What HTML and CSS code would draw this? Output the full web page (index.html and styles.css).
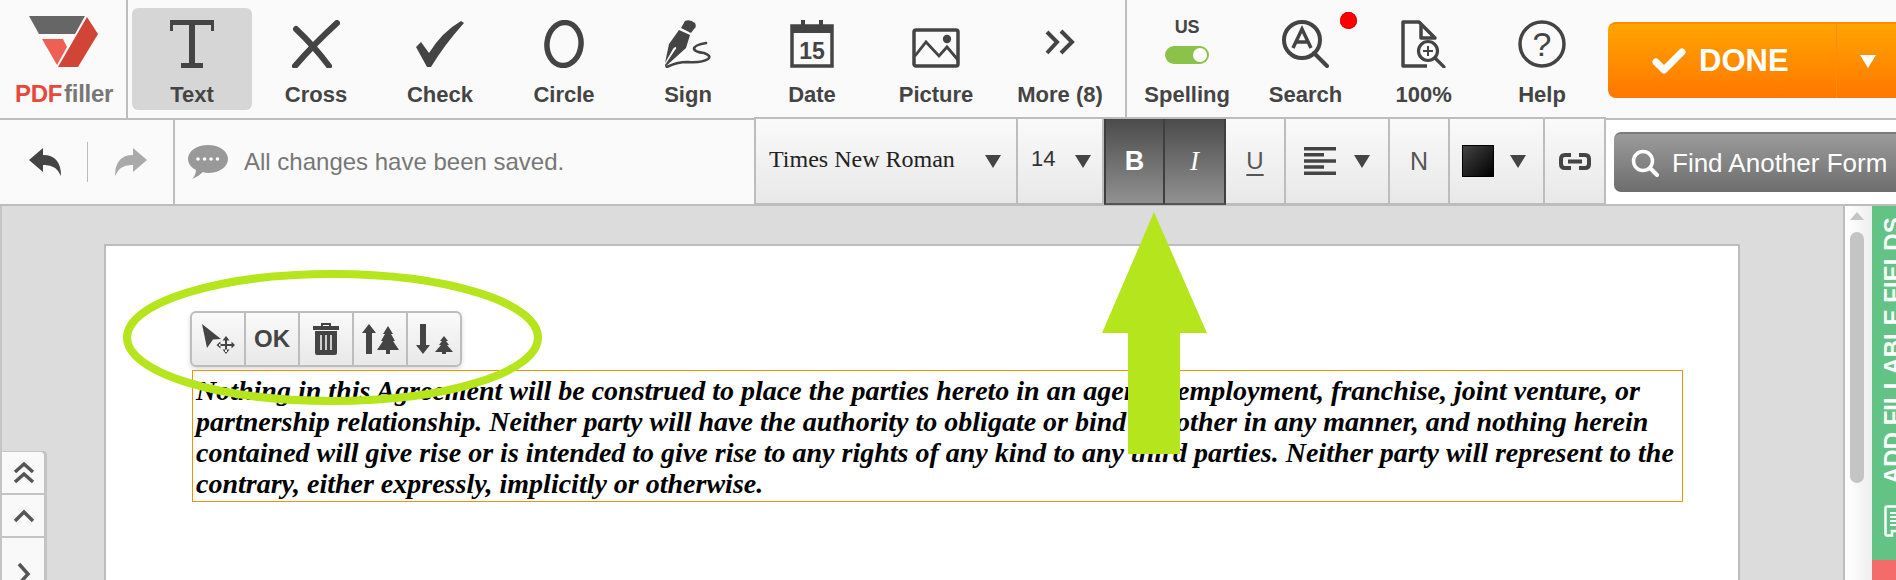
FILE: index.html
```html
<!DOCTYPE html>
<html lang="en">
<head>
<meta charset="utf-8">
<title>PDFfiller</title>
<link rel="stylesheet" href="styles.css">
</head>
<body>
<div class="app">
  <header class="top">
    <div class="logo">
      <svg class="logo-mark" viewBox="0 0 70 52" width="70" height="52">
        <path fill="#666" d="M0 0H56L46 18H10Z"/>
        <path fill="#ee6055" d="M13 23H34L38 31L28 49Z"/>
        <path fill="#d04535" d="M58 1L69 18L49 51H29Z"/>
      </svg>
      <div class="logo-text"><span class="logo-pdf">PDF</span><span class="logo-filler">filler</span></div>
    </div>
    <nav class="tools">
      <div class="tool active">
        <svg class="ico" width="44" height="48" viewBox="0 0 44 48"><path fill="#444" d="M0 0H44V11H41V5H25V43H33V48H11V43H19V5H3V11H0Z"/></svg>
        <span class="label">Text</span>
      </div>
      <div class="tool">
        <svg class="ico" width="48" height="48" viewBox="0 0 48 48"><path fill="none" stroke="#444" stroke-width="6" stroke-linecap="round" d="M45 3Q22 24 3 46M4 9Q22 26 37 46"/></svg>
        <span class="label">Cross</span>
      </div>
      <div class="tool">
        <svg class="ico" width="48" height="48" viewBox="0 0 48 48"><path fill="#444" d="M0 27L5 22L13 33Q26 12 45 1L48 3Q29 24 15 47H11Z"/></svg>
        <span class="label">Check</span>
      </div>
      <div class="tool">
        <svg class="ico" width="42" height="48" viewBox="0 0 42 48"><ellipse cx="21" cy="24" rx="17" ry="21.5" fill="none" stroke="#444" stroke-width="5.5" transform="rotate(6 21 24)"/></svg>
        <span class="label">Circle</span>
      </div>
      <div class="tool">
        <svg class="ico" width="48" height="48" viewBox="0 0 48 48">
          <path fill="#444" d="M21 1Q26-1 31 3Q33 7 30 9L27 13L17 8Z"/>
          <path fill="#444" d="M15 10L26 15L22 28L1 47L1 45L11 30Q13 29 12 27Q10 27 9 29L1 43L5 24Z"/>
          <path fill="none" stroke="#444" stroke-width="2.6" stroke-linecap="round" d="M42 23Q30 25 30 29Q31 32 40 33Q48 36 44 39Q38 43 24 42Q12 42 3 47"/>
        </svg>
        <span class="label">Sign</span>
      </div>
      <div class="tool">
        <svg class="ico" width="44" height="48" viewBox="0 0 44 48">
          <path fill="none" stroke="#444" stroke-width="3.5" d="M2 6H42V46H2Z"/>
          <path fill="#444" d="M2 6H42V13H2ZM11 0H15V8H11ZM29 0H33V8H29Z"/>
          <text x="22" y="39" class="cal">15</text>
        </svg>
        <span class="label">Date</span>
      </div>
      <div class="tool">
        <svg class="ico" width="48" height="48" viewBox="0 0 48 48">
          <rect x="2" y="10" width="44" height="36" rx="2" fill="none" stroke="#444" stroke-width="3.5"/>
          <path fill="none" stroke="#444" stroke-width="2.8" d="M3 36L14 22L27 36L35 27L46 40"/>
          <circle cx="35" cy="19" r="4.2" fill="#444"/>
        </svg>
        <span class="label">Picture</span>
      </div>
      <div class="tool">
        <svg class="ico" width="48" height="48" viewBox="0 0 48 48"><path fill="none" stroke="#444" stroke-width="4" d="M11 12L21 22L11 33M25 11L36 22L25 33" /></svg>
        <span class="label">More (8)</span>
      </div>
    </nav>
    <div class="utils">
      <div class="tool util">
        <div class="ico spell">
          <span class="lang">US</span>
          <span class="toggle"><span class="knob"></span></span>
        </div>
        <span class="label">Spelling</span>
      </div>
      <div class="tool util">
        <svg class="ico" width="48" height="48" viewBox="0 0 48 48">
          <circle cx="21" cy="20" r="18" fill="none" stroke="#444" stroke-width="4"/>
          <path stroke="#444" stroke-width="4" stroke-linecap="round" d="M33 33L46 46"/>
          <path fill="none" stroke="#444" stroke-width="3.5" d="M12 28L21 9L30 28M15 22H27"/>
        </svg>
        <span class="dot"></span>
        <span class="label">Search</span>
      </div>
      <div class="tool util">
        <svg class="ico" width="46" height="48" viewBox="0 0 46 48">
          <path fill="none" stroke="#444" stroke-width="3.5" stroke-linejoin="round" d="M26 46H2V2H18L34 18H20V3"/>
          <circle cx="27" cy="31" r="9.5" fill="#fafafa" stroke="#444" stroke-width="3.2"/>
          <path stroke="#444" stroke-width="2" d="M22 31H32M27 26V36"/>
          <path stroke="#444" stroke-width="3.2" stroke-linecap="round" d="M34 38L43 47"/>
        </svg>
        <span class="label">100%</span>
      </div>
      <div class="tool util">
        <svg class="ico" width="48" height="48" viewBox="0 0 48 48">
          <circle cx="24" cy="24" r="22" fill="none" stroke="#444" stroke-width="3.5"/>
          <text x="24" y="36" class="q">?</text>
        </svg>
        <span class="label">Help</span>
      </div>
    </div>
    <div class="done">
      <span class="done-main">
        <svg width="34" height="26" viewBox="0 0 34 26"><path fill="none" stroke="#fff" stroke-width="7" stroke-linecap="round" stroke-linejoin="round" d="M4 14L12 22L30 4"/></svg>
        <span>DONE</span>
      </span>
      <span class="done-more"><span class="tri tri-white"></span></span>
    </div>
  </header>

  <section class="second">
    <div class="history">
      <svg width="32" height="28" viewBox="0 0 32 28"><path fill="#444" d="M0 12L14 0V7Q32 7 32 28Q27 16 14 17V24Z"/></svg>
      <span class="hist-sep"></span>
      <svg width="34" height="28" viewBox="0 0 32 28"><path fill="#aaa" d="M32 12L18 0V7Q0 7 0 28Q5 16 18 17V24Z"/></svg>
    </div>
    <div class="message">
      <svg width="40" height="34" viewBox="0 0 40 34">
        <path fill="#999" d="M20 0C31 0 40 6 40 14S31 28 20 28Q17 28 15 27Q10 32 4 34Q8 30 8 25Q0 21 0 14C0 6 9 0 20 0Z"/>
        <g fill="#fff"><circle cx="10" cy="14" r="1.8"/><circle cx="16.5" cy="14" r="1.8"/><circle cx="23" cy="14" r="1.8"/><circle cx="29.5" cy="14" r="1.8"/></g>
      </svg>
      <span>All changes have been saved.</span>
    </div>
    <div class="format">
      <div class="cell font-cell"><span class="font-name">Times New Roman</span><span class="tri"></span></div>
      <div class="cell size-cell"><span class="size-val">14</span><span class="tri"></span></div>
      <div class="cell bi on first"><span class="b-mark">B</span></div>
      <div class="cell bi on"><span class="i-mark">I</span></div>
      <div class="cell u-cell"><span class="u-mark">U</span></div>
      <div class="cell align-cell">
        <svg width="33" height="28" viewBox="0 0 33 28"><path fill="#444" d="M0 0H32V3.5H0ZM0 6.100H20V9.600H0ZM0 12.200H32V15.700H0ZM0 18.300H20V21.800H0ZM0 24.400H32V27.900H0Z"/></svg>
        <span class="tri"></span>
      </div>
      <div class="cell n-cell">N</div>
      <div class="cell color-cell"><span class="swatch"></span><span class="tri"></span></div>
      <div class="cell link-cell">
        <svg width="32" height="17" viewBox="0 0 32 17"><path fill="none" stroke="#444" stroke-width="4" d="M12 2H6Q2 2 2 6V11Q2 15 6 15H12M20 2H26Q30 2 30 6V11Q30 15 26 15H20M9 8.5H23"/></svg>
      </div>
    </div>
    <div class="find-wrap">
      <div class="find">
        <svg width="28" height="28" viewBox="0 0 28 28"><circle cx="12" cy="12" r="9.5" fill="none" stroke="#fff" stroke-width="3.5"/><path stroke="#fff" stroke-width="4" stroke-linecap="round" d="M19 19L26 26"/></svg>
        <span>Find Another Form</span>
      </div>
    </div>
  </section>

  <section class="work">
    <main class="canvas">
      <div class="page">
        <div class="mini">
          <div class="mini-cell">
            <svg width="33" height="30" viewBox="0 0 33 30">
              <path fill="#444" d="M0 0L19 15L11 15.500L5 24Z"/>
              <path fill="#444" d="M17 20H30V22H17ZM23 14H25V28H23ZM20.500 16.500L24 12L27.500 16.500ZM20.500 25.500L24 30L27.500 25.500ZM18.500 17.500L14.500 21L18.500 24.500ZM29.500 17.500L33 21L29.500 24.500Z"/>
            </svg>
          </div>
          <div class="mini-cell ok">OK</div>
          <div class="mini-cell">
            <svg width="26" height="32" viewBox="0 0 26 32">
              <path fill="#444" d="M0 3H8V0H18V3H26V7H0ZM10 2V3H16V2ZM2 8H24V30Q24 32 22 32H4Q2 32 2 30Z"/>
              <path stroke="#fafafa" stroke-width="1.5" d="M8 12V27M13 12V27M18 12V27"/>
            </svg>
          </div>
          <div class="mini-cell">
            <svg width="37" height="31" viewBox="0 0 37 31">
              <path fill="#444" d="M7 0L14 9H10V30H4V9H0Z"/>
              <path fill="#444" d="M26 2L31 10H29L33 17H31L37 26H28V30H24V26H15L21 17H19L23 10H21Z"/>
            </svg>
          </div>
          <div class="mini-cell">
            <svg width="37" height="31" viewBox="0 0 37 31">
              <path fill="#444" d="M4 0H10V21H14L7 30L0 21H4Z"/>
              <path fill="#444" d="M28 12L32 17H30L33 21H31L37 28H30V30H26V28H19L25 21H23L26 17H24Z"/>
            </svg>
          </div>
        </div>
        <div class="field">Nothing in this Agreement will be construed to place the parties hereto in an agency, employment, franchise, joint venture, or partnership relationship. Neither party will have the authority to obligate or bind the other in any manner, and nothing herein contained will give rise or is intended to give rise to any rights of any kind to any third parties. Neither party will represent to the contrary, either expressly, implicitly or otherwise.</div>
      </div>
      <div class="pager">
        <div class="pager-row"><svg width="24" height="24" viewBox="0 0 24 24"><path fill="none" stroke="#555" stroke-width="3.5" d="M3 11L12 3L21 11M3 21L12 13L21 21"/></svg></div>
        <div class="pager-row"><svg width="24" height="14" viewBox="0 0 24 14"><path fill="none" stroke="#555" stroke-width="3.5" d="M3 12L12 3L21 12"/></svg></div>
        <div class="pager-row last"><svg width="14" height="24" viewBox="0 0 14 24"><path fill="none" stroke="#555" stroke-width="3.5" d="M2 2L11 12L2 22"/></svg></div>
      </div>
    </main>
    <aside class="scroll">
      <span class="scroll-up"></span>
      <span class="thumb"></span>
    </aside>
    <aside class="side">
      <div class="side-green">
        <span class="side-text">ADD FILLABLE FIELDS</span>
        <svg class="side-ico" width="12" height="32" viewBox="0 0 12 32"><path fill="none" stroke="#fff" stroke-width="2.5" d="M12 1.5H3Q1.5 1.5 1.5 3V29Q1.5 30.5 3 30.5H8V26H12"/><path stroke="#fff" stroke-width="2" d="M6 8H12M6 12H12M6 16H12M6 20H12"/></svg>
      </div>
      <div class="side-red"></div>
    </aside>
  </section>

  <svg class="overlay" width="1896" height="580" viewBox="0 0 1896 580">
    <ellipse cx="332.5" cy="337.5" rx="205.5" ry="63.5" fill="none" stroke="#b5e61d" stroke-width="8"/>
    <path fill="#b5e61d" d="M1154 212L1207 333H1180V454H1128V333H1102Z"/>
  </svg>
</div>
</body>
</html>
```

FILE: styles.css
```css
* { box-sizing: border-box; }
html, body { margin: 0; height: 100%; overflow: hidden; background: #fff; }
body { font-family: "Liberation Sans", Arial, sans-serif; color: #444; }
.app { position: relative; width: 1896px; height: 580px; overflow: hidden; display: flex; flex-direction: column; }

.top { height: 120px; display: flex; background: #fafafa; border-bottom: 2px solid #bdbdbd; flex: none; }
.logo { width: 128px; flex: none; border-right: 2px solid #bdbdbd; padding: 16px 0 0 29px; }
.logo-mark { display: block; }
.logo-text { margin: 13px 0 0 -14px; font-weight: 700; font-size: 24px; line-height: 26px; letter-spacing: -0.3px; white-space: nowrap; }
.logo-pdf { color: #e8483c; }
.logo-filler { color: #777; margin-left: 2px; }

.tools { display: flex; width: 999px; flex: none; padding: 2px 0 0 2px; border-right: 2px solid #bdbdbd; }
.tool { position: relative; width: 124px; flex: none; display: flex; flex-direction: column; align-items: center; padding-top: 12px; margin-top: 6px; height: 102px; }
.tool.active { background: #d6d6d6; border-radius: 6px; width: 120px; margin-left: 2px; margin-right: 2px; }
.ico { display: block; height: 48px; flex: none; }
.label { font-size: 22px; font-weight: 700; line-height: 24px; margin-top: 15px; color: #444; white-space: nowrap; }
.cal { font: 700 23px "Liberation Sans", sans-serif; fill: #444; text-anchor: middle; }
.q { font: 400 34px "Liberation Sans", sans-serif; fill: #444; text-anchor: middle; }

.utils { display: flex; width: 480px; flex: none; padding: 2px 0 0 1px; }
.util { width: 118.3px; }
.spell { display: flex; flex-direction: column; align-items: center; width: 48px; }
.lang { font-size: 18px; font-weight: 700; line-height: 18px; margin-top: -2px; }
.toggle { display: block; width: 44px; height: 18px; margin-top: 10px; border-radius: 9px; background: #8bc34a; position: relative; }
.knob { position: absolute; right: 2px; top: 2px; width: 14px; height: 14px; border-radius: 50%; background: #fff; }
.dot { position: absolute; left: 94px; top: 4px; width: 17px; height: 17px; border-radius: 50%; background: #f00; box-shadow: inset 0 0 0 1px #d00; }

.done { flex: none; width: 289px; height: 76px; margin: 22px 0 0 1px; display: flex; border-radius: 8px 0 0 8px; background: linear-gradient(#ffa400, #ff7700); border-top: 2px solid #ff8a00; color: #fff; }
.done-main { width: 229px; display: flex; align-items: center; gap: 13px; padding-left: 44px; font-size: 31px; font-weight: 700; border-right: 1px solid #ff8a10; }
.done-more { flex: 1; display: flex; padding: 0 0 0 23px; align-items: center; }

.tri { display: block; width: 0; height: 0; border-left: 8px solid transparent; border-right: 8px solid transparent; border-top: 13px solid #444; }
.tri-white { border-top-color: #fff; }

.second { height: 86px; display: flex; flex: none; background: #fafafa; border-bottom: 2px solid #bdbdbd; }
.history { width: 175px; flex: none; border-right: 2px solid #bdbdbd; display: flex; align-items: center; padding-left: 29px; }
.hist-sep { width: 1px; height: 40px; background: #bbb; margin: 0 26px; }
.message { width: 579px; flex: none; display: flex; align-items: center; gap: 16px; padding-left: 13px; font-size: 24px; color: #777; }
.format { width: 852px; flex: none; display: flex; margin: -3px 0 -1px; height: 88px; background: linear-gradient(#fafafa, #e8e8e8); border: solid #bdbdbd; border-width: 2px 0 2px 2px; }
.cell { flex: none; height: 100%; display: flex; align-items: center; border-right: 2px solid #bdbdbd; }
.font-cell { width: 262px; padding-left: 13px; justify-content: space-between; padding-right: 15px; }
.font-name { font: 24px "Liberation Serif", serif; color: #222; margin-top: -4px; }
.size-cell { width: 86px; padding-left: 13px; gap: 20px; }
.size-val { font-size: 22px; color: #333; margin-top: -5px; }
.bi { width: 61px; justify-content: center; color: #fff; border-right: 2px solid #3f3f3f; }
.on { background: linear-gradient(#4b4b4b, #919191); margin-bottom: -2px; height: calc(100% + 2px); border-bottom: 2px solid #555; }
.first { border-left: 2px solid #3f3f3f; }
.b-mark { font-size: 27px; font-weight: 700; }
.i-mark { font: italic 27px "Liberation Serif", serif; }
.u-cell { width: 60px; justify-content: center; }
.u-mark { font-size: 24px; text-decoration: underline; text-underline-offset: 5px; color: #555; }
.align-cell { width: 104px; padding-left: 18px; gap: 17px; }
.n-cell { width: 60px; justify-content: center; font-size: 25px; color: #555; }
.color-cell { width: 95px; padding-left: 12px; gap: 16px; }
.swatch { width: 32px; height: 32px; background: linear-gradient(135deg, #444, #000); border: 1px solid #000; }
.link-cell { width: 61px; justify-content: center; }
.find-wrap { flex: 1; background: #fff; padding: 12px 0 0 8px; min-width: 0; }
.find { width: 300px; height: 60px; border-radius: 7px; display: flex; align-items: center; gap: 13px; padding-left: 17px; font-size: 26px; color: #fff; background: linear-gradient(#9b9b9b, #6d6d6d); border-top: 2px solid #7c7c7c; white-space: nowrap; }

.work { flex: 1; min-height: 0; display: flex; }
.canvas { position: relative; width: 1845px; flex: none; background: #dcdcdc; border-right: 2px solid #bdbdbd; border-left: 2px solid #c4c4c4; padding: 38px 0 0 102px; overflow: hidden; }
.page { position: relative; width: 1636px; height: 400px; background: #fff; border: 2px solid #bdbdbd; border-bottom: 0; }
.mini { position: absolute; left: 84px; top: 65px; width: 272px; height: 56px; display: flex; background: linear-gradient(#fafafa, #e8e8e8); border: 2px solid #bdbdbd; border-radius: 6px; box-shadow: 0 2px 4px rgba(0,0,0,.15); }
.mini-cell { width: 54px; flex: 1; display: flex; align-items: center; justify-content: center; border-right: 2px solid #bdbdbd; }
.mini-cell:last-child { border-right: 0; }
.ok { font-size: 24px; font-weight: 700; color: #444; }
.field { position: absolute; left: 86px; top: 124px; width: 1491px; height: 132px; border: 1px solid #f39200; padding: 4px 3px 0; font: italic 700 28px/31px "Liberation Serif", serif; color: #000; }
.pager { position: absolute; left: -2px; top: 246px; width: 44px; background: #f9f9f9; border-radius: 0 4px 0 0; box-shadow: 3px -1px 0 #c4c4c4; }
.pager-row { height: 43px; display: flex; align-items: center; justify-content: center; border-bottom: 2px solid #c4c4c4; padding-left: 4px; }
.pager-row.last { height: 60px; border-bottom: 0; padding-top: 12px; }

.scroll { width: 27px; flex: none; position: relative; background: linear-gradient(90deg, #fff, #efefef); }
.scroll-up { position: absolute; left: 5px; top: 6px; width: 0; height: 0; border-left: 7px solid transparent; border-right: 7px solid transparent; border-bottom: 8px solid #c4c4c4; }
.thumb { position: absolute; left: 5px; top: 26px; width: 14px; height: 251px; border-radius: 7px; background: #c4c4c4; }

.side { width: 24px; flex: none; display: flex; flex-direction: column; overflow: hidden; }
.side-green { height: 354px; position: relative; background: #62c385; color: #fff; overflow: hidden; }
.side-text { position: absolute; left: 7px; top: 18px; height: 260px; writing-mode: vertical-rl; transform: rotate(180deg); font-size: 24px; font-weight: 700; line-height: 28px; white-space: nowrap; text-align: left; }
.side-ico { position: absolute; left: 12px; top: 299px; }
.side-red { flex: 1; background: #f36b6b; }

.overlay { position: absolute; left: 0; top: 0; pointer-events: none; }
```
